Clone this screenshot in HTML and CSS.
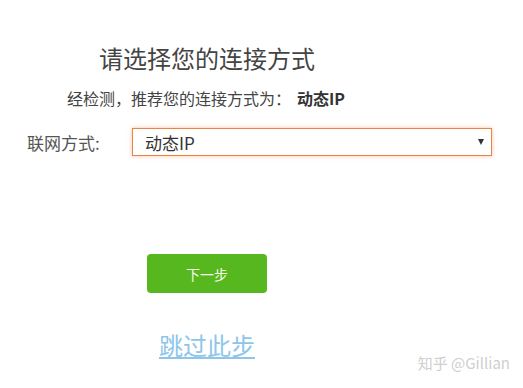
FILE: index.html
```html
<!DOCTYPE html>
<html lang="zh-CN">
  <head>
    <meta charset="UTF-8" />
    <meta name="viewport" content="width=device-width, initial-scale=1.0" />
    <title>请选择您的连接方式</title>
    <link rel="stylesheet" href="styles.css">
  </head>
  <body>
    <div class="wizard">
      <h1 class="wizard-title">请选择您的连接方式</h1>
      <p class="wizard-detect">
        经检测，推荐您的连接方式为：<b class="detect-result">动态IP</b>
      </p>
      <div class="form-row">
        <label class="form-label" for="wan-type">联网方式:</label>
        <div class="select-wrap">
          <select id="wan-type" class="form-select">
            <option>动态IP</option>
            <option>宽带拨号</option>
            <option>静态IP</option>
          </select>
          <span class="select-arrow"></span>
        </div>
      </div>
      <button class="btn-next" type="button">下一步</button>
      <a class="skip-link" href="#">跳过此步</a>
    </div>
    <div class="watermark">知乎 @Gillian</div>
  </body>
</html>
```

FILE: styles.css
```css
body {
  margin: 0;
  font-family: "Noto Sans CJK SC", "Noto Sans", sans-serif;
  color: #444;
  background: #fff;
}
.wizard {
  display: flex;
  flex-direction: column;
  padding-top: 41px;
}
.wizard-title {
  width: 414px;
  margin: 0;
  font-size: 24px;
  font-weight: normal;
  line-height: 34px;
  text-align: center;
  color: #444;
}
.wizard-detect {
  width: 412px;
  margin: 12px 0 0 0;
  font-size: 16px;
  line-height: 22px;
  text-align: center;
  color: #444;
}
.detect-result {
  margin-left: 6px;
  font-weight: bold;
  color: #333;
}
.form-row {
  display: flex;
  align-items: center;
  margin-top: 19px;
  padding-left: 27px;
}
.form-label {
  width: 105px;
  font-size: 17px;
  color: #555;
}
.select-wrap {
  position: relative;
  width: 360px;
}
.form-select {
  appearance: none;
  -webkit-appearance: none;
  width: 100%;
  height: 28px;
  margin: 0;
  padding: 0 12px;
  border: 1px solid #e8864a;
  border-radius: 0;
  box-shadow: 0 0 4px rgba(240, 140, 70, 0.55);
  background: #fff;
  font-family: inherit;
  font-size: 17px;
  color: #333;
  outline: none;
}
.select-arrow {
  position: absolute;
  right: 8px;
  top: 11px;
  border-left: 3px solid transparent;
  border-right: 3px solid transparent;
  border-top: 6px solid #333;
  pointer-events: none;
}
.btn-next {
  width: 120px;
  height: 39px;
  margin: 98px 0 0 147px;
  border: none;
  border-radius: 4px;
  background: #56b71e;
  color: #f4fbe8;
  font-family: inherit;
  font-size: 14px;
  cursor: pointer;
}
.skip-link {
  align-self: flex-start;
  margin: 37px 0 0 159px;
  font-size: 24px;
  line-height: 30px;
  color: #8ec5ea;
  text-decoration: underline;
}
.watermark {
  position: absolute;
  right: 13px;
  bottom: 15px;
  font-size: 15px;
  color: #cfcfcf;
}
```
